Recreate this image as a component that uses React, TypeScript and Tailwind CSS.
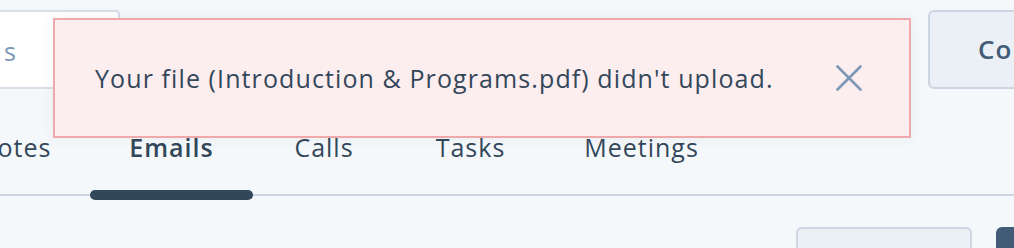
import React from "react";

const tabs = [
  { label: "Notes", w: "w-[151px]", active: false },
  { label: "Emails", w: "w-[163px]", active: true },
  { label: "Calls", w: "w-[142px]", active: false },
  { label: "Tasks", w: "w-[151px]", active: false },
  { label: "Meetings", w: "w-[191px]", active: false },
];

export default function App() {
  return (
    <div
      className="relative w-[1014px] h-[248px] overflow-hidden bg-[#f5f8fa] text-[#33475b]"
      style={{ fontFamily: "'Open Sans', Lato, sans-serif" }}
    >
      {/* top row */}
      <div className="flex items-start pt-[10px]">
        <div className="-ml-[200px] w-[320px] h-[79px] shrink-0 rounded-[4px] border-2 border-[#d7dfe9] bg-white flex items-center pt-[5px]">
          <div className="flex justify-end w-[217px] shrink-0">
            <span className="shrink-0 text-[25px] tracking-[3px] text-[#7c98b6] whitespace-nowrap">
              Search activities
            </span>
          </div>
        </div>
        <div className="ml-auto -mr-[200px] w-[286px] h-[79px] shrink-0 rounded-[6px] border-2 border-[#cbd6e2] bg-[#eaf0f6] flex items-center pl-[48px]">
          <span className="text-[26px] tracking-[1px] font-semibold text-[#425b76] whitespace-nowrap">Collapse all</span>
        </div>
      </div>

      {/* tabs */}
      <div className="relative mt-[43px]">
        <div className="absolute left-0 right-0 bottom-[4px] h-[2px] bg-[#cbd6e2]" />
        <div className="relative flex -ml-[61px]">
          {tabs.map((t) => (
            <div key={t.label} className={`${t.w} shrink-0 flex flex-col items-center`}>
              <span
                className={`text-[25px] tracking-[1px] leading-[30px] whitespace-nowrap ${t.active ? "font-semibold" : ""}`}
              >
                {t.label}
              </span>
              <div className={`mt-[28px] h-[10px] w-full rounded-full ${t.active ? "bg-[#33475b]" : "bg-transparent"}`} />
            </div>
          ))}
        </div>
      </div>

      {/* bottom buttons */}
      <div className="flex justify-end mt-[27px]">
        <div className="w-[176px] h-[60px] rounded-[6px] border-2 border-[#cbd6e2] bg-[#eaf0f6] shrink-0" />
        <div className="ml-[24px] -mr-[100px] w-[118px] h-[60px] rounded-[6px] bg-[#425b76] shrink-0" />
      </div>

      {/* alert toast */}
      <div className="absolute left-[53px] top-[18px] w-[858px] h-[120px] border-2 border-[#f0a9ab] bg-[#fcedee] shadow-[0_0_14px_rgba(45,62,80,0.06)] flex items-center pl-[40px] pr-[47px]">
        <span className="text-[25px] tracking-[1.1px] leading-[30px] text-[#33475b] whitespace-nowrap">
          Your file (Introduction &amp; Programs.pdf) didn't upload.
        </span>
        <button className="ml-auto w-[26px] h-[26px] flex items-center justify-center">
          <svg width="26" height="26" viewBox="0 0 26 26">
            <path d="M1.5 1.5 L24.5 24.5 M24.5 1.5 L1.5 24.5" stroke="#7c98b6" strokeWidth="2.6" strokeLinecap="round" />
          </svg>
        </button>
      </div>
    </div>
  );
}
